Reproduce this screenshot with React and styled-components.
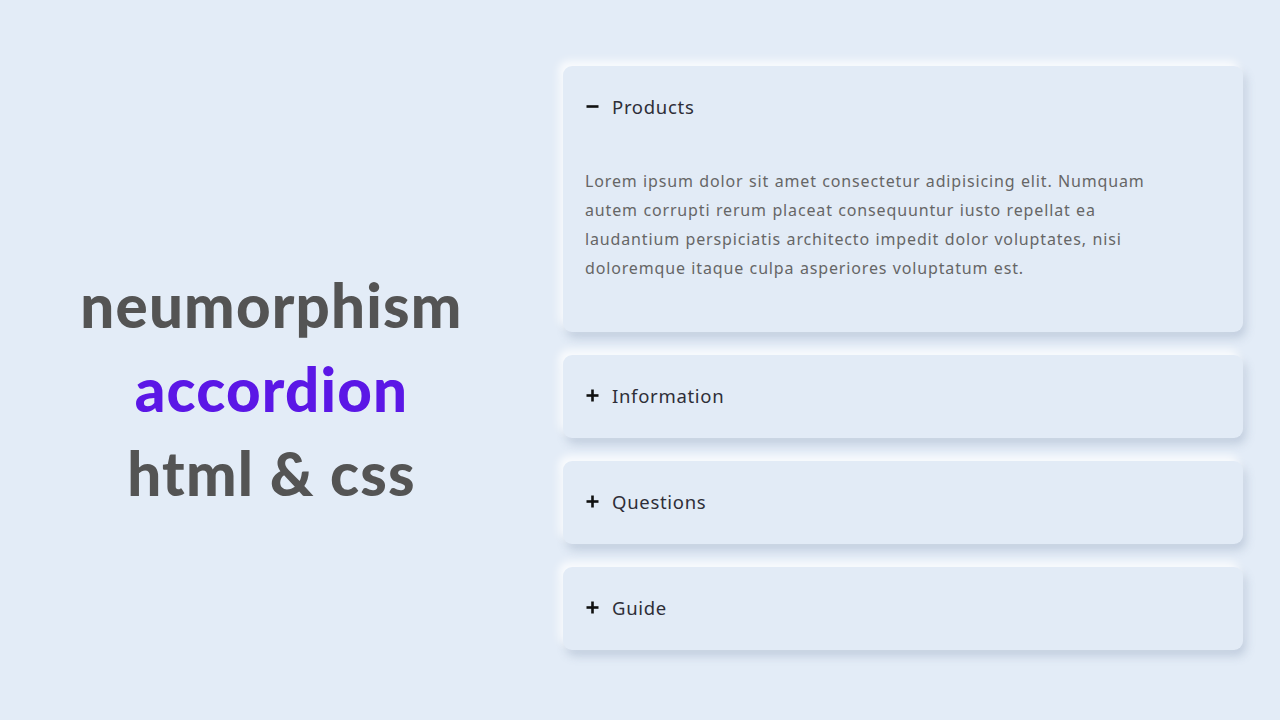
import React, { useState } from 'react';
import styled, { createGlobalStyle } from 'styled-components';

const GlobalStyle = createGlobalStyle`
  html, body {
    margin: 0;
    padding: 0;
    background: #e3ecf7;
  }
  body {
    font-family: 'Noto Sans', 'Open Sans', sans-serif;
  }
`;

const Page = styled.main`
  width: 1280px;
  height: 720px;
  display: grid;
  grid-template-columns: 543px 680px;
  column-gap: 20px;
  align-items: center;
  background: #e3ecf7;
  overflow: hidden;
`;

const Heading = styled.h1`
  margin: 58px 0 0;
  text-align: center;
  font-family: 'Lato', 'DejaVu Sans', sans-serif;
  font-weight: 900;
  font-size: 60px;
  line-height: 84px;
  color: #545454;
  letter-spacing: 1.2px;
`;

const Accent = styled.span`
  display: block;
  color: #5b17e6;
`;

const Line = styled.span`
  display: block;
`;

const List = styled.div`
  display: flex;
  flex-direction: column;
  gap: 23px;
  padding-bottom: 4px;
`;

const Card = styled.section`
  background: #e2ebf6;
  border-radius: 9px;
  box-shadow: -4px -5px 9px rgba(255, 255, 255, 0.85),
    3px 6px 10px rgba(115, 135, 165, 0.3);
`;

const Header = styled.button`
  width: 100%;
  height: 83px;
  display: flex;
  align-items: center;
  gap: 13px;
  padding: 0 23px 2px;
  border: none;
  background: transparent;
  cursor: pointer;
  font-family: 'Noto Sans', 'Open Sans', sans-serif;
  font-size: 18.5px;
  letter-spacing: 0.7px;
  color: #2e2e38;
  text-align: left;
`;

const Body = styled.p`
  margin: 0;
  width: 600px;
  padding: 18px 0 49px 22px;
  font-family: 'Noto Sans', 'Open Sans', sans-serif;
  font-size: 16px;
  letter-spacing: 0.85px;
  word-spacing: 0.5px;
  line-height: 29px;
  color: #666;
`;

const Icon = ({ open }) => (
  <svg width="13" height="13" viewBox="0 0 13 13" aria-hidden="true">
    <path d="M0.5 6.5 H12.5" stroke="#111" strokeWidth="2.6" />
    {!open && <path d="M6.5 0.5 V12.5" stroke="#111" strokeWidth="2.6" />}
  </svg>
);

const items = [
  {
    title: 'Products',
    text:
      'Lorem ipsum dolor sit amet consectetur adipisicing elit. Numquam autem corrupti rerum placeat consequuntur iusto repellat ea laudantium perspiciatis architecto impedit dolor voluptates, nisi doloremque itaque culpa asperiores voluptatum est.',
  },
  { title: 'Information', text: 'Lorem ipsum dolor sit amet consectetur adipisicing elit.' },
  { title: 'Questions', text: 'Lorem ipsum dolor sit amet consectetur adipisicing elit.' },
  { title: 'Guide', text: 'Lorem ipsum dolor sit amet consectetur adipisicing elit.' },
];

export default function App() {
  const [open, setOpen] = useState(0);
  return (
    <>
      <GlobalStyle />
      <Page>
        <Heading>
          <Line>neumorphism</Line>
          <Accent>accordion</Accent>
          <Line>html &amp; css</Line>
        </Heading>
        <List>
          {items.map((item, i) => (
            <Card key={item.title}>
              <Header onClick={() => setOpen(open === i ? -1 : i)}>
                <Icon open={open === i} />
                {item.title}
              </Header>
              {open === i && <Body>{item.text}</Body>}
            </Card>
          ))}
        </List>
      </Page>
    </>
  );
}
